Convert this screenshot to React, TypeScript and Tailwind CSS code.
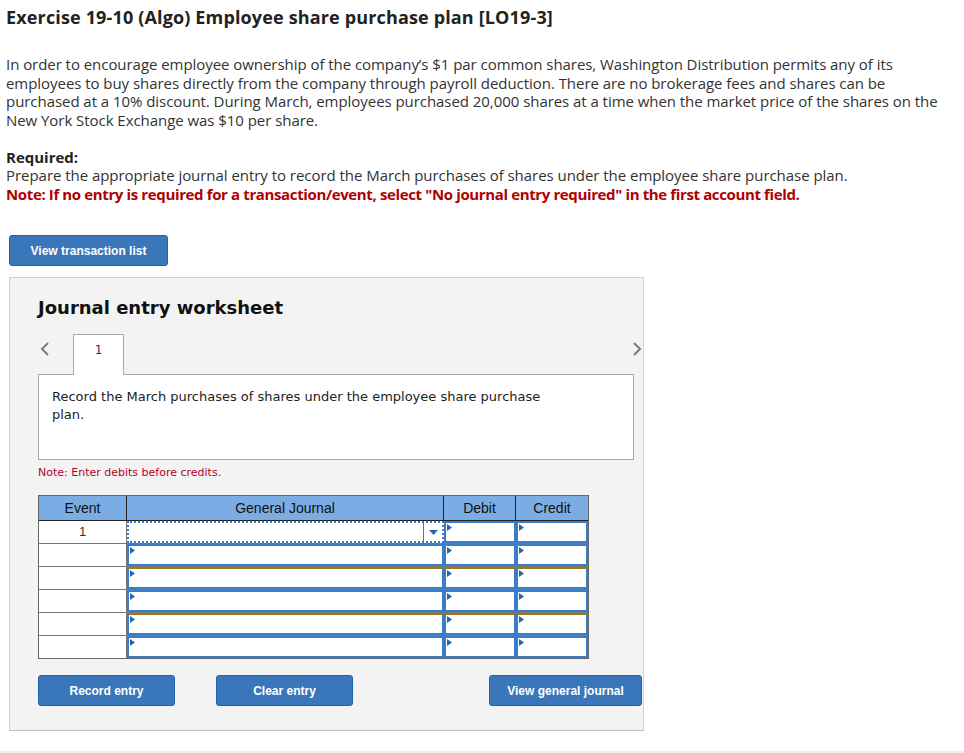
import React from 'react';

const body = { fontFamily: '"Open Sans", Lato, sans-serif' };
const verdana = { fontFamily: '"DejaVu Sans", Verdana, sans-serif' };
const arial = { fontFamily: '"Liberation Sans", Arial, sans-serif' };

function Chevron({ dir }: { dir: 'left' | 'right' }) {
  return (
    <svg width="10" height="16" viewBox="0 0 10 16" className="shrink-0">
      <polyline
        points={dir === 'left' ? '8,2 2,8 8,14' : '2,2 8,8 2,14'}
        fill="none"
        stroke="#7a7a7a"
        strokeWidth="2"
      />
    </svg>
  );
}

function Marker() {
  return (
    <svg width="5" height="7" viewBox="0 0 5 7" className="absolute left-[1px] top-[1px]">
      <polygon points="0,0 5,3.5 0,7" fill="#2466b3" />
    </svg>
  );
}

function Button({ label, className }: { label: string; className: string }) {
  return (
    <button
      style={arial}
      className={`h-[31px] rounded-[3px] border border-[#1f62aa] bg-[#3a77ba] text-[12px] font-bold text-white ${className}`}
    >
      {label}
    </button>
  );
}

export default function App() {
  const rows = [0, 1, 2, 3, 4, 5];

  return (
    <div className="min-h-[753px] bg-white text-[#333]">
      <div className="px-[6px] pt-[5px]">
        <h1 style={body} className="text-[18px] font-bold leading-[24px] tracking-[0.15px] text-[#222]">
          Exercise 19-10 (Algo) Employee share purchase plan [LO19-3]
        </h1>

        <p style={body} className="mt-[26px] whitespace-nowrap text-[15px] leading-[18.5px] tracking-[-0.05px]">
          In order to encourage employee ownership of the company’s $1 par common shares, Washington Distribution permits any of its
          <br />
          employees to buy shares directly from the company through payroll deduction. There are no brokerage fees and shares can be
          <br />
          purchased at a 10% discount. During March, employees purchased 20,000 shares at a time when the market price of the shares on the
          <br />
          New York Stock Exchange was $10 per share.
        </p>

        <p style={body} className="mt-[18.5px] whitespace-nowrap text-[15px] leading-[18.5px]">
          <span className="font-bold text-[#222]">Required:</span>
          <br />
          <span className="tracking-[-0.04px]">
            Prepare the appropriate journal entry to record the March purchases of shares under the employee share purchase plan.
          </span>
          <br />
          <span className="font-bold tracking-[-0.37px] text-[#b00000]">
            Note: If no entry is required for a transaction/event, select "No journal entry required" in the first account field.
          </span>
        </p>
      </div>

      <div className="pl-[9px]">
        <Button label="View transaction list" className="mt-[32px] w-[159px]" />

        <div className="mt-[11px] w-[635px] border border-[#d2d2d2] border-b-[#bdbdbd] bg-[#f3f3f3] pb-[24px] pl-[28px] pr-[1px] pt-[18px]">
          <h2 style={verdana} className="text-[18px] font-bold leading-[24px] text-[#111]">
            Journal entry worksheet
          </h2>

          <div className="mt-[14px] flex items-start">
            <div className="ml-[2px] mt-[7px]">
              <Chevron dir="left" />
            </div>
            <div
              style={verdana}
              className="relative z-10 ml-[23px] h-[41px] w-[51px] border border-b-0 border-[#aaa] bg-white pt-[6px] text-center text-[12px] text-[#333]"
            >
              1
            </div>
            <div className="ml-auto mt-[7px]">
              <Chevron dir="right" />
            </div>
          </div>

          <div className="-mt-px h-[86px] w-[596px] border border-[#aaa] bg-white pl-[13px] pt-[13px]">
            <p style={verdana} className="text-[13px] leading-[18px] text-[#222]">
              Record the March purchases of shares under the employee share purchase
              <br />
              plan.
            </p>
          </div>

          <p style={verdana} className="mt-[6px] text-[11px] leading-[14px] text-[#b3002d]">
            Note: Enter debits before credits.
          </p>

          <div style={arial} className="mt-[15px] w-[551px] border border-[#666] bg-[#808080]">
            <div className="grid h-[24px] grid-cols-[88px_317px_72px_72px] bg-[#7badE4] text-[14px] leading-[24px] text-[#111]">
              <div className="border-r border-[#222] text-center">Event</div>
              <div className="border-r border-[#222] text-center">General Journal</div>
              <div className="border-r border-[#222] text-center">Debit</div>
              <div className="text-center">Credit</div>
            </div>
            {rows.map((r) => {
              const gold = r === 2 || r === 4;
              return (
                <div
                  key={r}
                  className={`grid h-[23px] grid-cols-[88px_317px_72px_72px] border-t ${
                    r === 0 ? 'border-[#222]' : 'border-[#777]'
                  }`}
                >
                  <div className="border-r border-[#777] bg-white text-center text-[13px] leading-[21px] text-[#333]">
                    {r === 0 ? '1' : ''}
                  </div>
                  {r === 0 ? (
                    <div className="relative flex bg-white">
                      <div className="flex-1 border-2 border-dotted border-[#3b7cc6]" />
                      <div className="absolute right-[20px] top-[2px] h-[18px] w-px bg-[#3b7cc6]" />
                      <svg width="9" height="5" viewBox="0 0 9 5" className="absolute right-[6px] top-[9px]">
                        <polygon points="0,0 9,0 4.5,5" fill="#2466b3" />
                      </svg>
                    </div>
                  ) : (
                    <div
                      className={`relative border-2 border-[#3b7cc6] bg-white ${
                        gold ? 'border-t-[#9a7a14]' : ''
                      }`}
                    >
                      <Marker />
                    </div>
                  )}
                  {[0, 1].map((c) => (
                    <div
                      key={c}
                      className={`relative border-2 border-[#3b7cc6] bg-white ${
                        gold ? 'border-t-[#9a7a14]' : ''
                      }`}
                    >
                      <Marker />
                    </div>
                  ))}
                </div>
              );
            })}
          </div>

          <div className="mt-[16px] flex">
            <Button label="Record entry" className="w-[137px]" />
            <Button label="Clear entry" className="ml-[41px] w-[137px]" />
            <Button label="View general journal" className="ml-auto w-[153px]" />
          </div>
        </div>
      </div>

      <div className="mt-[20px] border-t-2 border-[#eee]" />
    </div>
  );
}
